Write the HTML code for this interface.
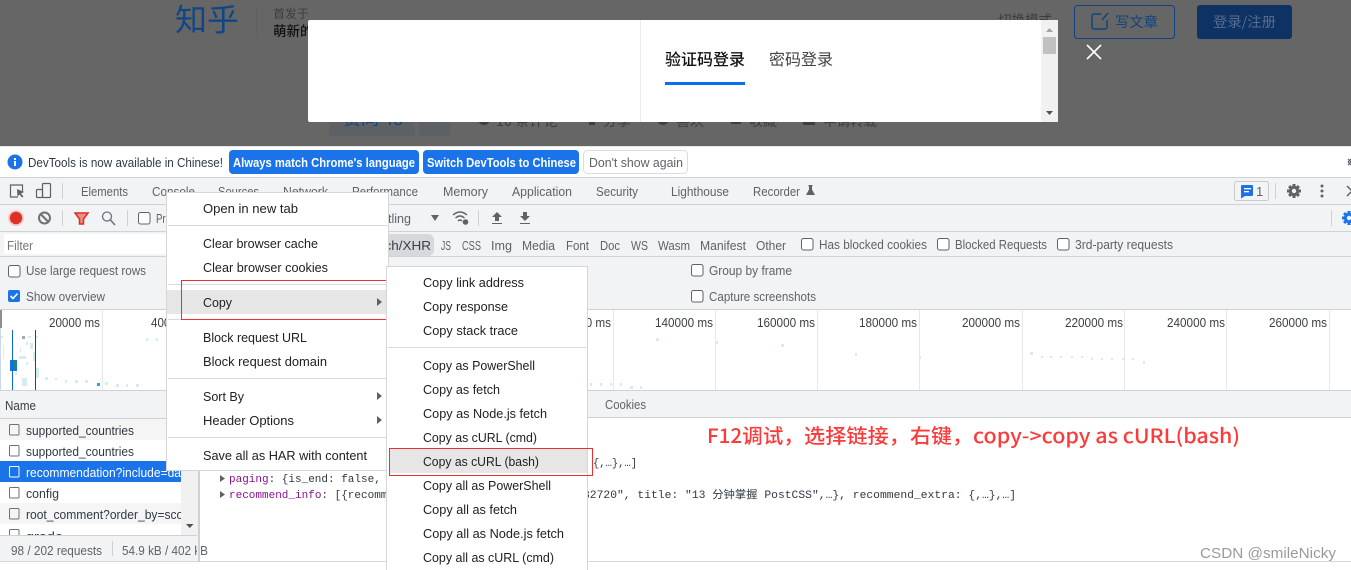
<!DOCTYPE html>
<html lang="zh"><head><meta charset="utf-8"><title>DevTools</title>
<style>
html,body{margin:0;padding:0;background:#fff;overflow:hidden;width:1351px;height:570px}
svg{display:block}
text{font-family:"Liberation Sans","Noto Sans CJK SC",sans-serif;font-size:12.5px;fill:#5f6368;white-space:pre}
.m{fill:#202124;font-size:13px}
.d{fill:#444}
.c{font-family:"Liberation Mono","Noto Sans CJK SC",monospace;font-size:11px;fill:#303942}
.p{font-family:"Liberation Mono",monospace;font-size:11px;fill:#881391}
.z{font-family:"Noto Sans CJK SC",sans-serif}
.r{font-family:"Noto Sans CJK SC",sans-serif;font-size:20px;fill:#fc3a3a;font-weight:500}
.s{fill:none;stroke:#d0d2d5;stroke-width:1}
.cb{fill:#fff;stroke:#5f6368;stroke-width:1}
</style></head><body>
<svg width="1351" height="570" viewBox="0 0 1351 570" xmlns="http://www.w3.org/2000/svg">
<rect width="1351" height="570" fill="#fff"/>
<!-- page backdrop -->
<rect width="1351" height="146" fill="#666"/>
<text x="175" y="31" textLength="64" lengthAdjust="spacingAndGlyphs" class="z" style="font-size:31px;fill:#0f4688;font-weight:400">知乎</text>
<rect x="256" y="8" width="1" height="28" fill="#5f5f5f"/>
<text x="273" y="18" textLength="36" lengthAdjust="spacingAndGlyphs" class="z" style="font-size:12px;fill:#3d3d3d">首发于</text>
<text x="273" y="36" class="z" style="font-size:13.5px;fill:#0f0f0f;font-weight:500">萌新的日常</text>
<text x="998" y="25" textLength="54" lengthAdjust="spacingAndGlyphs" class="z" style="font-size:13.5px;fill:#3c3c3c">切换模式</text>
<rect x="1074.5" y="5.5" width="100" height="33" rx="3" fill="none" stroke="#0f4380"/>
<path d="M1101 14h-7a2 2 0 0 0-2 2v11a2 2 0 0 0 2 2h11a2 2 0 0 0 2-2v-7M1102 20l6-7" fill="none" stroke="#0f4380" stroke-width="1.500"/>
<text x="1115" y="27" textLength="43" lengthAdjust="spacingAndGlyphs" class="z" style="font-size:14px;fill:#0f4380">写文章</text>
<rect x="1197" y="5" width="95" height="34" rx="3" fill="#0f3264"/>
<text x="1213" y="27" textLength="63" lengthAdjust="spacingAndGlyphs" class="z" style="font-size:14px;fill:#566d8d">登录/注册</text>
<rect x="329" y="110" width="86" height="26" rx="2" fill="#5d6065"/>
<rect x="419" y="110" width="31" height="26" rx="2" fill="#5d6065"/>
<text x="343" y="125" textLength="60" lengthAdjust="spacingAndGlyphs" class="z" style="font-size:14px;fill:#0e4480">赞同 46</text>
<circle cx="484" cy="119" r="6" fill="#3e3e3e"/>
<text x="496" y="126" textLength="62" lengthAdjust="spacingAndGlyphs" class="z" style="font-size:14px;fill:#3e3e3e">10 条评论</text>
<rect x="589" y="115" width="6" height="10" fill="#3e3e3e"/>
<text x="603" y="126" textLength="28" class="z" style="font-size:14px;fill:#3e3e3e">分享</text>
<circle cx="663" cy="119" r="6" fill="#3e3e3e"/>
<text x="676" y="126" textLength="28" class="z" style="font-size:14px;fill:#3e3e3e">喜欢</text>
<rect x="731" y="115" width="10" height="9" fill="#3e3e3e"/>
<text x="749" y="126" textLength="28" class="z" style="font-size:14px;fill:#3e3e3e">收藏</text>
<rect x="803" y="115" width="12" height="10" rx="1" fill="#3e3e3e"/>
<text x="823" y="126" textLength="54" class="z" style="font-size:14px;fill:#3e3e3e">申请转载</text>
<!-- modal -->
<rect x="308" y="20" width="750" height="102" rx="2" fill="#fff"/>
<rect x="640" y="20" width="1" height="102" fill="#ebebeb"/>
<text x="665" y="65" textLength="80" lengthAdjust="spacingAndGlyphs" class="z" style="font-size:16px;fill:#121212;font-weight:500">验证码登录</text>
<text x="769" y="65" textLength="64" lengthAdjust="spacingAndGlyphs" class="z" style="font-size:16px;fill:#444">密码登录</text>
<rect x="665" y="82" width="80" height="3" fill="#0a6fe8"/>
<rect x="1041" y="20" width="17" height="102" fill="#f1f1f1"/>
<rect x="1043" y="37" width="13" height="17" fill="#c1c1c1"/>
<path d="M1046 32l3.500-4 3.500 4z" fill="#a3a3a3"/><path d="M1046 111h7l-3.500 4z" fill="#505050"/>
<path d="M1087 45l14 14M1101 45l-14 14" stroke="#fff" stroke-width="1.600" fill="none"/>
<!-- infobar -->
<rect y="146" width="1351" height="1" fill="#e6e6e6"/>
<rect y="147" width="1351" height="30" fill="#fff"/>
<circle cx="15" cy="162" r="7.500" fill="#1a73e8"/>
<rect x="14" y="161" width="2" height="5" fill="#fff"/><rect x="14" y="158" width="2" height="2" fill="#fff"/>
<text x="28" y="167" textLength="195" lengthAdjust="spacingAndGlyphs" style="fill:#303942">DevTools is now available in Chinese!</text>
<rect x="229" y="150" width="190" height="24" rx="4" fill="#1a73e8"/>
<text x="233" y="167" textLength="182" lengthAdjust="spacingAndGlyphs" style="fill:#fff;font-weight:700">Always match Chrome's language</text>
<rect x="423" y="150" width="156" height="24" rx="4" fill="#1a73e8"/>
<text x="427" y="167" textLength="149" lengthAdjust="spacingAndGlyphs" style="fill:#fff;font-weight:700">Switch DevTools to Chinese</text>
<rect x="583.500" y="150.500" width="104" height="23" rx="4" fill="#fff" stroke="#dadce0"/>
<text x="589" y="167" textLength="94" lengthAdjust="spacingAndGlyphs">Don't show again</text>
<path d="M1348 159l3 3M1351 159l-3 3M1348 165l3-3M1351 165l-3-3" stroke="#5f6368" stroke-width="1.200"/>
<!-- toolbars -->
<rect y="177" width="1351" height="134" fill="#f1f3f5"/>
<rect y="177" width="1351" height="1" fill="#cfd1d4"/>
<rect y="204" width="1351" height="1" fill="#cfd1d4"/>
<rect y="231" width="1351" height="1" fill="#cfd1d4"/>
<rect y="256" width="1351" height="1" fill="#cfd1d4"/>
<path d="M18 197h-7.500v-12h12v7" fill="none" stroke="#5f6368" stroke-width="1.200"/>
<path d="M17 189l7 3-3 1.500 2.500 3-1.500 1-2.500-3-2 2z" fill="#5f6368"/>
<rect x="42.500" y="183.500" width="8" height="14" rx="1" fill="none" stroke="#5f6368" stroke-width="1.200"/>
<rect x="36.500" y="189.500" width="6" height="8" rx="1" fill="none" stroke="#5f6368" stroke-width="1.200"/>
<rect x="62" y="183" width="1" height="16" fill="#cfd1d4"/>
<text x="81" y="196" textLength="47" lengthAdjust="spacingAndGlyphs">Elements</text>
<text x="152" y="196" textLength="43" lengthAdjust="spacingAndGlyphs">Console</text>
<text x="218" y="196" textLength="41" lengthAdjust="spacingAndGlyphs">Sources</text>
<text x="283" y="196" textLength="45" lengthAdjust="spacingAndGlyphs">Network</text>
<text x="352" y="196" textLength="66" lengthAdjust="spacingAndGlyphs">Performance</text>
<text x="443" y="196" textLength="45" lengthAdjust="spacingAndGlyphs">Memory</text>
<text x="512" y="196" textLength="60" lengthAdjust="spacingAndGlyphs">Application</text>
<text x="596" y="196" textLength="42" lengthAdjust="spacingAndGlyphs">Security</text>
<text x="671" y="196" textLength="58" lengthAdjust="spacingAndGlyphs">Lighthouse</text>
<text x="753" y="196" textLength="47" lengthAdjust="spacingAndGlyphs">Recorder</text>
<path d="M808.500 185h4v1l-.5.500v3l3 5.500h-9l3-5.500v-3l-.5-.5z" fill="#5f6368"/>
<rect x="1234.500" y="181.500" width="34" height="19" rx="2" fill="none" stroke="#c8cacd"/>
<path d="M1242 185h10a1 1 0 0 1 1 1v9a1 1 0 0 1-1 1h-7l-4 2.500v-12.500a1 1 0 0 1 1-1z" fill="#1a73e8"/>
<rect x="1244" y="188" width="7" height="1.300" fill="#fff"/><rect x="1244" y="191" width="5" height="1.300" fill="#fff"/>
<text x="1256" y="196" style="font-size:13px">1</text>
<rect x="1275" y="183" width="1" height="16" fill="#cfd1d4"/>
<path d="M1294 184v14M1287 191h14M1289.100 186.100l9.800 9.800M1298.900 186.100l-9.800 9.800" stroke="#5f6368" stroke-width="3"/>
<circle cx="1294" cy="191" r="5.200" fill="#5f6368"/>
<circle cx="1294" cy="191" r="2.200" fill="#f1f3f5"/>
<circle cx="1322" cy="186" r="1.500" fill="#5f6368"/><circle cx="1322" cy="191" r="1.500" fill="#5f6368"/><circle cx="1322" cy="196" r="1.500" fill="#5f6368"/>
<path d="M1347 186l5 5-5 5" fill="none" stroke="#5f6368" stroke-width="1.500"/>
<!-- toolbar 2 -->
<circle cx="16" cy="218" r="8" fill="#f3c9c6"/><circle cx="16" cy="218" r="6.200" fill="#dc3028"/>
<circle cx="44.500" cy="218" r="5.500" fill="none" stroke="#6e7276" stroke-width="2"/>
<path d="M40.500 214l8 8" stroke="#6e7276" stroke-width="2"/>
<rect x="62" y="210" width="1" height="16" fill="#cfd1d4"/>
<path d="M75 213h13l-4.500 6v5h-4v-5z" fill="#f28b82" stroke="#d93025" stroke-width="1.500"/>
<circle cx="107" cy="216.500" r="4.500" fill="none" stroke="#6e7276" stroke-width="1.300"/>
<path d="M110.500 220l4.500 5" stroke="#6e7276" stroke-width="1.600"/>
<rect x="127" y="210" width="1" height="16" fill="#cfd1d4"/>
<rect x="138.500" y="212.500" width="11.500" height="11.500" rx="2" class="cb"/>
<text x="156" y="223" textLength="15" lengthAdjust="spacingAndGlyphs">Pre</text>
<text x="388" y="223" textLength="23" lengthAdjust="spacingAndGlyphs">tling</text>
<path d="M431 215h8l-4 6z" fill="#5f6368"/>
<path d="M453 215q7-6 14 0M455.500 218q4.500-4 9 0M458 221q2-2 4 0" fill="none" stroke="#5f6368" stroke-width="1.400"/>
<circle cx="465.500" cy="222" r="2.800" fill="#5f6368"/>
<rect x="478" y="210" width="1" height="16" fill="#cfd1d4"/>
<path d="M497 212l5 5h-3v4h-4v-4h-3zM492 223h10v1h-10z" fill="#5f6368"/>
<path d="M523 212h4v4h3l-5 5-5-5h3zM520 223h10v1h-10z" fill="#5f6368"/>
<rect x="1331" y="210" width="1" height="16" fill="#cfd1d4"/>
<path d="M1349 211v14M1342 218h14M1344.100 213.100l9.800 9.800M1353.900 213.100l-9.800 9.800" stroke="#1a73e8" stroke-width="3"/>
<circle cx="1349" cy="218" r="5.200" fill="#1a73e8"/>
<circle cx="1349" cy="218" r="2.200" fill="#f1f3f5"/>
<!-- filter row -->
<rect x="4" y="234" width="163" height="20" fill="#fff"/>
<text x="7" y="250" textLength="26" lengthAdjust="spacingAndGlyphs" style="fill:#757575">Filter</text>
<rect x="350" y="234" width="84" height="22" rx="6" fill="#d6d8dc"/>
<text x="365" y="250" textLength="66" lengthAdjust="spacingAndGlyphs" style="fill:#3c4043">Fetch/XHR</text>
<text x="441" y="250" textLength="10" lengthAdjust="spacingAndGlyphs">JS</text>
<text x="462" y="250" textLength="19" lengthAdjust="spacingAndGlyphs">CSS</text>
<text x="491" y="250" textLength="21" lengthAdjust="spacingAndGlyphs">Img</text>
<text x="522" y="250" textLength="33" lengthAdjust="spacingAndGlyphs">Media</text>
<text x="566" y="250" textLength="23" lengthAdjust="spacingAndGlyphs">Font</text>
<text x="600" y="250" textLength="20" lengthAdjust="spacingAndGlyphs">Doc</text>
<text x="631" y="250" textLength="17" lengthAdjust="spacingAndGlyphs">WS</text>
<text x="658" y="250" textLength="32" lengthAdjust="spacingAndGlyphs">Wasm</text>
<text x="700" y="250" textLength="46" lengthAdjust="spacingAndGlyphs">Manifest</text>
<text x="756" y="250" textLength="30" lengthAdjust="spacingAndGlyphs">Other</text>
<rect x="801.500" y="238.500" width="11.500" height="11.500" rx="2" class="cb"/>
<text x="819" y="249" textLength="108" lengthAdjust="spacingAndGlyphs">Has blocked cookies</text>
<rect x="937.500" y="238.500" width="11.500" height="11.500" rx="2" class="cb"/>
<text x="955" y="249" textLength="92" lengthAdjust="spacingAndGlyphs">Blocked Requests</text>
<rect x="1057.500" y="238.500" width="11.500" height="11.500" rx="2" class="cb"/>
<text x="1075" y="249" textLength="98" lengthAdjust="spacingAndGlyphs">3rd-party requests</text>
<!-- options -->
<rect x="8.500" y="265.500" width="11.500" height="11.500" rx="2" class="cb"/>
<text x="26" y="275" textLength="120" lengthAdjust="spacingAndGlyphs">Use large request rows</text>
<rect x="8" y="290" width="12" height="12" rx="2" fill="#1a73e8"/>
<path d="M10.500 296l2.500 2.500 4.500-5" fill="none" stroke="#fff" stroke-width="1.600"/>
<text x="26" y="301" textLength="79" lengthAdjust="spacingAndGlyphs">Show overview</text>
<rect x="691.500" y="264.500" width="11.500" height="11.500" rx="2" class="cb"/>
<text x="709" y="275" textLength="83" lengthAdjust="spacingAndGlyphs">Group by frame</text>
<rect x="691.500" y="290.500" width="11.500" height="11.500" rx="2" class="cb"/>
<text x="709" y="301" textLength="107" lengthAdjust="spacingAndGlyphs">Capture screenshots</text>
<!-- overview -->
<rect y="309" width="1351" height="1" fill="#cfd1d4"/>
<rect y="310" width="1351" height="80" fill="#fff"/>
<rect y="310" width="2" height="18" fill="#8f8f8f"/>
<rect y="328" width="1" height="62" fill="#c9d8ec"/>
<g fill="#e6e8ea">
<rect x="102" y="310" width="1" height="80"/><rect x="205" y="310" width="1" height="80"/><rect x="613" y="310" width="1" height="80"/><rect x="715" y="310" width="1" height="80"/><rect x="817" y="310" width="1" height="80"/><rect x="919" y="310" width="1" height="80"/><rect x="1022" y="310" width="1" height="80"/><rect x="1124" y="310" width="1" height="80"/><rect x="1226" y="310" width="1" height="80"/><rect x="1329" y="310" width="1" height="80"/>
</g>
<g fill="#d3edf2">
<rect x="1" y="336" width="2" height="2"/><rect x="28" y="336" width="3" height="2"/><rect x="36" y="336" width="2" height="2"/><rect x="3" y="345" width="1" height="14"/><rect x="20" y="347" width="1" height="5"/><rect x="26" y="342" width="2" height="3"/><rect x="30" y="343" width="3" height="6"/><rect x="19" y="356" width="7" height="3"/><rect x="33" y="352" width="3" height="9"/><rect x="26" y="362" width="2" height="3"/><rect x="15" y="372" width="2" height="3"/><rect x="36" y="368" width="3" height="10"/><rect x="22" y="378" width="5" height="8"/><rect x="45" y="377" width="3" height="3"/><rect x="55" y="378" width="2" height="2"/><rect x="65" y="380" width="2" height="3"/><rect x="75" y="380" width="3" height="3"/><rect x="85" y="380" width="3" height="3"/><rect x="105" y="382" width="3" height="3"/><rect x="116" y="384" width="3" height="3"/><rect x="126" y="384" width="2" height="3"/><rect x="136" y="384" width="3" height="3"/><rect x="146" y="338" width="2" height="3"/><rect x="156" y="338" width="2" height="3"/>
<rect x="590" y="383" width="2" height="3"/><rect x="600" y="383" width="2" height="3"/><rect x="610" y="383" width="2" height="3"/><rect x="620" y="383" width="2" height="3"/><rect x="630" y="386" width="3" height="3"/><rect x="640" y="386" width="2" height="3"/><rect x="656" y="338" width="3" height="3"/><rect x="715" y="341" width="3" height="3"/><rect x="781" y="344" width="3" height="3"/><rect x="855" y="353" width="2" height="3"/><rect x="919" y="356" width="2" height="3"/><rect x="1030" y="352" width="3" height="3"/><rect x="1041" y="356" width="2" height="2"/><rect x="1050" y="356" width="2" height="2"/><rect x="1060" y="356" width="2" height="2"/><rect x="1071" y="356" width="2" height="2"/><rect x="1081" y="356" width="2" height="2"/><rect x="1091" y="358" width="2" height="2"/><rect x="1101" y="358" width="2" height="2"/><rect x="1111" y="358" width="2" height="2"/><rect x="1122" y="358" width="2" height="2"/><rect x="1132" y="358" width="2" height="2"/><rect x="1143" y="361" width="2" height="3"/>
</g>
<rect x="22" y="336" width="3" height="3" fill="#a8a8a8"/>
<rect x="97" y="383" width="3" height="3" fill="#28a7e0"/>
<rect x="10" y="360" width="7" height="11" fill="#1a73e8"/><rect x="12" y="361" width="3" height="8" fill="#1b8a6b"/>
<rect x="12" y="330" width="1" height="60" fill="#0a6ad6"/>
<rect x="35" y="330" width="1" height="60" fill="#a31515"/>
<text x="49" y="327" textLength="51" lengthAdjust="spacingAndGlyphs" style="fill:#3c4043">20000 ms</text>
<text x="151" y="327" textLength="51" lengthAdjust="spacingAndGlyphs" style="fill:#3c4043">40000 ms</text>
<text x="553" y="327" textLength="58" lengthAdjust="spacingAndGlyphs" style="fill:#3c4043">120000 ms</text>
<text x="655" y="327" textLength="58" lengthAdjust="spacingAndGlyphs" style="fill:#3c4043">140000 ms</text>
<text x="757" y="327" textLength="58" lengthAdjust="spacingAndGlyphs" style="fill:#3c4043">160000 ms</text>
<text x="859" y="327" textLength="58" lengthAdjust="spacingAndGlyphs" style="fill:#3c4043">180000 ms</text>
<text x="962" y="327" textLength="58" lengthAdjust="spacingAndGlyphs" style="fill:#3c4043">200000 ms</text>
<text x="1065" y="327" textLength="58" lengthAdjust="spacingAndGlyphs" style="fill:#3c4043">220000 ms</text>
<text x="1167" y="327" textLength="58" lengthAdjust="spacingAndGlyphs" style="fill:#3c4043">240000 ms</text>
<text x="1269" y="327" textLength="58" lengthAdjust="spacingAndGlyphs" style="fill:#3c4043">260000 ms</text>
<rect y="390" width="1351" height="1" fill="#cfd1d4"/>
<!-- right panel -->
<rect x="200" y="391" width="1151" height="26" fill="#f1f3f5"/>
<rect x="200" y="417" width="1151" height="1" fill="#cfd1d4"/>
<text x="605" y="409" textLength="41" lengthAdjust="spacingAndGlyphs">Cookies</text>
<path d="M220 475l5 3.500-5 3.500z" fill="#5f6368"/>
<path d="M220 491l5 3.500-5 3.500z" fill="#5f6368"/>
<text x="229" y="482" class="p">paging</text><text x="268.600" y="482" class="c">: {is_end: false,</text>
<text x="229" y="498" class="p">recommend_info</text><text x="321.400" y="498" class="c">: [{recommend_type: 1}]</text>
<text x="593" y="466" textLength="44" lengthAdjust="spacingAndGlyphs" class="c">{,…},…]</text>
<text x="583" y="498" textLength="433" lengthAdjust="spacingAndGlyphs" class="c">32720", title: "13 分钟掌握 PostCSS",…}, recommend_extra: {,…},…]</text>
<text x="707" y="443" textLength="97" lengthAdjust="spacingAndGlyphs" class="r">F12调试，</text>
<text x="804" y="443" textLength="106" lengthAdjust="spacingAndGlyphs" class="r">选择链接，</text>
<text x="910" y="443" textLength="63" lengthAdjust="spacingAndGlyphs" class="r">右键，</text>
<text x="973" y="443" textLength="267" lengthAdjust="spacingAndGlyphs" class="r">copy-&gt;copy as cURL(bash)</text>
<text x="1200" y="558" textLength="136" lengthAdjust="spacingAndGlyphs" style="font-size:15px;fill:#9a9a9a">CSDN @smileNicky</text>
<rect y="561" width="1351" height="1" fill="#d8d8d8"/>
<!-- network list -->
<rect y="391" width="199" height="27" fill="#f1f3f5"/>
<rect y="418" width="199" height="1" fill="#cfd1d4"/>
<text x="5" y="410" textLength="31" lengthAdjust="spacingAndGlyphs" style="fill:#3c4043">Name</text>
<rect y="419" width="199" height="116" fill="#fff"/>
<rect y="419" width="181" height="21" fill="#f5f5f5"/>
<rect y="461" width="181" height="21" fill="#1a73e8"/>
<rect y="503" width="181" height="21" fill="#f5f5f5"/>
<g>
<rect x="9.500" y="424.500" width="9.500" height="10.500" rx="1" fill="none" stroke="#6e7276"/>
<rect x="9.500" y="445.500" width="9.500" height="10.500" rx="1" fill="none" stroke="#6e7276"/>
<rect x="9.500" y="466.500" width="9.500" height="10.500" rx="1" fill="none" stroke="#fff"/>
<rect x="9.500" y="487.500" width="9.500" height="10.500" rx="1" fill="none" stroke="#6e7276"/>
<rect x="9.500" y="508.500" width="9.500" height="10.500" rx="1" fill="none" stroke="#6e7276"/>
<rect x="9.500" y="529.500" width="9.500" height="10.500" rx="1" fill="none" stroke="#6e7276"/>
</g>
<text x="26" y="435" textLength="108" lengthAdjust="spacingAndGlyphs" style="fill:#303942">supported_countries</text>
<text x="26" y="456" textLength="108" lengthAdjust="spacingAndGlyphs" style="fill:#303942">supported_countries</text>
<text x="26" y="477" textLength="165" lengthAdjust="spacingAndGlyphs" style="fill:#fff">recommendation?include=data</text>
<text x="26" y="498" textLength="33" lengthAdjust="spacingAndGlyphs" style="fill:#303942">config</text>
<text x="26" y="519" textLength="168" lengthAdjust="spacingAndGlyphs" style="fill:#303942">root_comment?order_by=score</text>
<text x="26" y="541" textLength="37" lengthAdjust="spacingAndGlyphs" style="fill:#303942">grade</text>
<rect x="181" y="419" width="18" height="116" fill="#f1f1f1"/>
<path d="M186 524h7.500l-3.750 4z" fill="#505050"/>
<rect y="535" width="199" height="26" fill="#f1f3f5"/>
<rect y="535" width="199" height="1" fill="#cfd1d4"/>
<text x="11" y="555" textLength="91" lengthAdjust="spacingAndGlyphs">98 / 202 requests</text>
<rect x="112" y="541" width="1" height="15" fill="#cfd1d4"/>
<text x="122" y="555" textLength="86" lengthAdjust="spacingAndGlyphs">54.9 kB / 402 kB</text>
<rect x="197" y="535" width="3" height="26" fill="#f1f3f5"/>
<rect x="198" y="391" width="2" height="171" fill="#cfd1d4"/>
<!-- context menu -->
<rect x="166.500" y="192.500" width="222" height="278" fill="#fff" stroke="#d6d6d6"/>
<text x="203" y="213" textLength="95" lengthAdjust="spacingAndGlyphs" class="m">Open in new tab</text>
<rect x="168" y="225" width="220" height="1" fill="#dadada"/>
<text x="203" y="248" textLength="115" lengthAdjust="spacingAndGlyphs" class="m">Clear browser cache</text>
<text x="203" y="272" textLength="125" lengthAdjust="spacingAndGlyphs" class="m">Clear browser cookies</text>
<rect x="168" y="284" width="220" height="1" fill="#dadada"/>
<rect x="167" y="290" width="220" height="24" fill="#e6e6e6"/>
<text x="203" y="307" textLength="29" lengthAdjust="spacingAndGlyphs" class="m">Copy</text>
<path d="M377 298l5 4-5 4z" fill="#5f6368"/>
<rect x="168" y="319" width="220" height="1" fill="#dadada"/>
<text x="203" y="342" textLength="104" lengthAdjust="spacingAndGlyphs" class="m">Block request URL</text>
<text x="203" y="366" textLength="124" lengthAdjust="spacingAndGlyphs" class="m">Block request domain</text>
<rect x="168" y="378" width="220" height="1" fill="#dadada"/>
<text x="203" y="401" textLength="41" lengthAdjust="spacingAndGlyphs" class="m">Sort By</text>
<path d="M377 392l5 4-5 4z" fill="#5f6368"/>
<text x="203" y="425" textLength="91" lengthAdjust="spacingAndGlyphs" class="m">Header Options</text>
<path d="M377 416l5 4-5 4z" fill="#5f6368"/>
<rect x="168" y="437" width="220" height="1" fill="#dadada"/>
<text x="203" y="460" textLength="164" lengthAdjust="spacingAndGlyphs" class="m">Save all as HAR with content</text>
<rect x="181.500" y="280.500" width="205" height="39" fill="none" stroke="#ee2f2f"/>
<!-- submenu -->
<rect x="386.500" y="266.500" width="201" height="310" fill="#fff" stroke="#d6d6d6"/>
<text x="423" y="287" textLength="101" lengthAdjust="spacingAndGlyphs" class="m">Copy link address</text>
<text x="423" y="311" textLength="85" lengthAdjust="spacingAndGlyphs" class="m">Copy response</text>
<text x="423" y="335" textLength="95" lengthAdjust="spacingAndGlyphs" class="m">Copy stack trace</text>
<rect x="388" y="347" width="198" height="1" fill="#dadada"/>
<text x="423" y="370" textLength="112" lengthAdjust="spacingAndGlyphs" class="m">Copy as PowerShell</text>
<text x="423" y="394" textLength="77" lengthAdjust="spacingAndGlyphs" class="m">Copy as fetch</text>
<text x="423" y="418" textLength="124" lengthAdjust="spacingAndGlyphs" class="m">Copy as Node.js fetch</text>
<text x="423" y="442" textLength="114" lengthAdjust="spacingAndGlyphs" class="m">Copy as cURL (cmd)</text>
<rect x="389" y="449" width="198" height="24" fill="#e6e6e6"/>
<text x="423" y="466" textLength="116" lengthAdjust="spacingAndGlyphs" class="m">Copy as cURL (bash)</text>
<rect x="389.500" y="448.500" width="203" height="27" fill="none" stroke="#ee2f2f"/>
<text x="423" y="490" textLength="128" lengthAdjust="spacingAndGlyphs" class="m">Copy all as PowerShell</text>
<text x="423" y="514" textLength="94" lengthAdjust="spacingAndGlyphs" class="m">Copy all as fetch</text>
<text x="423" y="538" textLength="141" lengthAdjust="spacingAndGlyphs" class="m">Copy all as Node.js fetch</text>
<text x="423" y="562" textLength="131" lengthAdjust="spacingAndGlyphs" class="m">Copy all as cURL (cmd)</text>
</svg>
</body></html>
